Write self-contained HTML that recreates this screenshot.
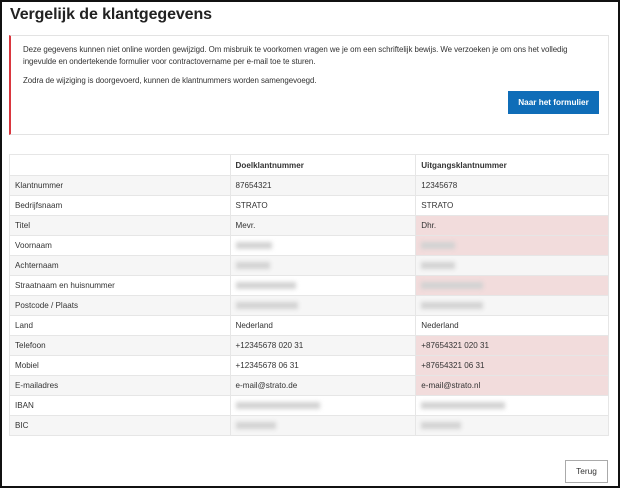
<!DOCTYPE html>
<html><head><meta charset="utf-8"><style>
*{box-sizing:border-box;margin:0;padding:0}
body{width:620px;height:488px;background:#fff;font-family:"Liberation Sans",sans-serif;color:#333;position:relative;overflow:hidden}
.frame{position:absolute;left:0;top:0;width:620px;height:488px;border:2px solid #111}
h1{position:absolute;left:10px;top:6px;font-size:16px;font-weight:bold;color:#222;letter-spacing:-0.1px}
.info{position:absolute;left:9px;top:35px;width:600px;height:100px;border:1px solid #e3e3e3;border-left:2px solid #d9363e}
.info p{position:absolute;left:12px;font-size:7.9px;color:#333;line-height:12px;letter-spacing:-0.05px}
.btn{position:absolute;left:497px;top:55px;width:91px;height:23px;background:#0f6db8;color:#fff;font-size:8.2px;font-weight:bold;text-align:center;line-height:23px}
table{position:absolute;left:9px;top:154px;width:600px;border-collapse:collapse;font-size:8.1px}
td,th{height:20px;border:1px solid #e6e6e6;padding:0 5px;text-align:left;vertical-align:middle}
th{height:21px;font-weight:bold;background:#fff}
tr:nth-child(even) td{background:#f6f6f6}
td.h{background:#f2dcdc!important}
.b{display:inline-block;height:7px;background:#d2d2d2;filter:blur(2px);vertical-align:middle}
.terug{position:absolute;left:565px;top:460px;width:43px;height:23px;border:1px solid #aaa;font-size:8.3px;text-align:center;line-height:21px;background:#fff}
</style></head><body>
<div class="frame"></div>
<h1>Vergelijk de klantgegevens</h1>
<div class="info">
<p style="top:8px">Deze gegevens kunnen niet online worden gewijzigd. Om misbruik te voorkomen vragen we je om een schriftelijk bewijs. We verzoeken je om ons het volledig<br>ingevulde en ondertekende formulier voor contractovername per e-mail toe te sturen.</p>
<p style="top:39px">Zodra de wijziging is doorgevoerd, kunnen de klantnummers worden samengevoegd.</p>
<div class="btn">Naar het formulier</div>
</div>
<table>
<colgroup><col style="width:221px"><col style="width:186px"><col style="width:193px"></colgroup>
<tr><th></th><th>Doelklantnummer</th><th>Uitgangsklantnummer</th></tr>
<tr><td>Klantnummer</td><td>87654321</td><td>12345678</td></tr>
<tr><td>Bedrijfsnaam</td><td>STRATO</td><td>STRATO</td></tr>
<tr><td>Titel</td><td>Mevr.</td><td class="h">Dhr.</td></tr>
<tr><td>Voornaam</td><td><span class="b" style="width:36px"></span></td><td class="h"><span class="b" style="width:34px"></span></td></tr>
<tr><td>Achternaam</td><td><span class="b" style="width:34px"></span></td><td><span class="b" style="width:34px"></span></td></tr>
<tr><td>Straatnaam en huisnummer</td><td><span class="b" style="width:60px"></span></td><td class="h"><span class="b" style="width:62px"></span></td></tr>
<tr><td>Postcode / Plaats</td><td><span class="b" style="width:62px"></span></td><td><span class="b" style="width:62px"></span></td></tr>
<tr><td>Land</td><td>Nederland</td><td>Nederland</td></tr>
<tr><td>Telefoon</td><td>+12345678 020 31</td><td class="h">+87654321 020 31</td></tr>
<tr><td>Mobiel</td><td>+12345678 06 31</td><td class="h">+87654321 06 31</td></tr>
<tr><td>E-mailadres</td><td>e-mail@strato.de</td><td class="h">e-mail@strato.nl</td></tr>
<tr><td>IBAN</td><td><span class="b" style="width:84px"></span></td><td><span class="b" style="width:84px"></span></td></tr>
<tr><td>BIC</td><td><span class="b" style="width:40px"></span></td><td><span class="b" style="width:40px"></span></td></tr>
</table>
<div class="terug">Terug</div>
</body></html>
